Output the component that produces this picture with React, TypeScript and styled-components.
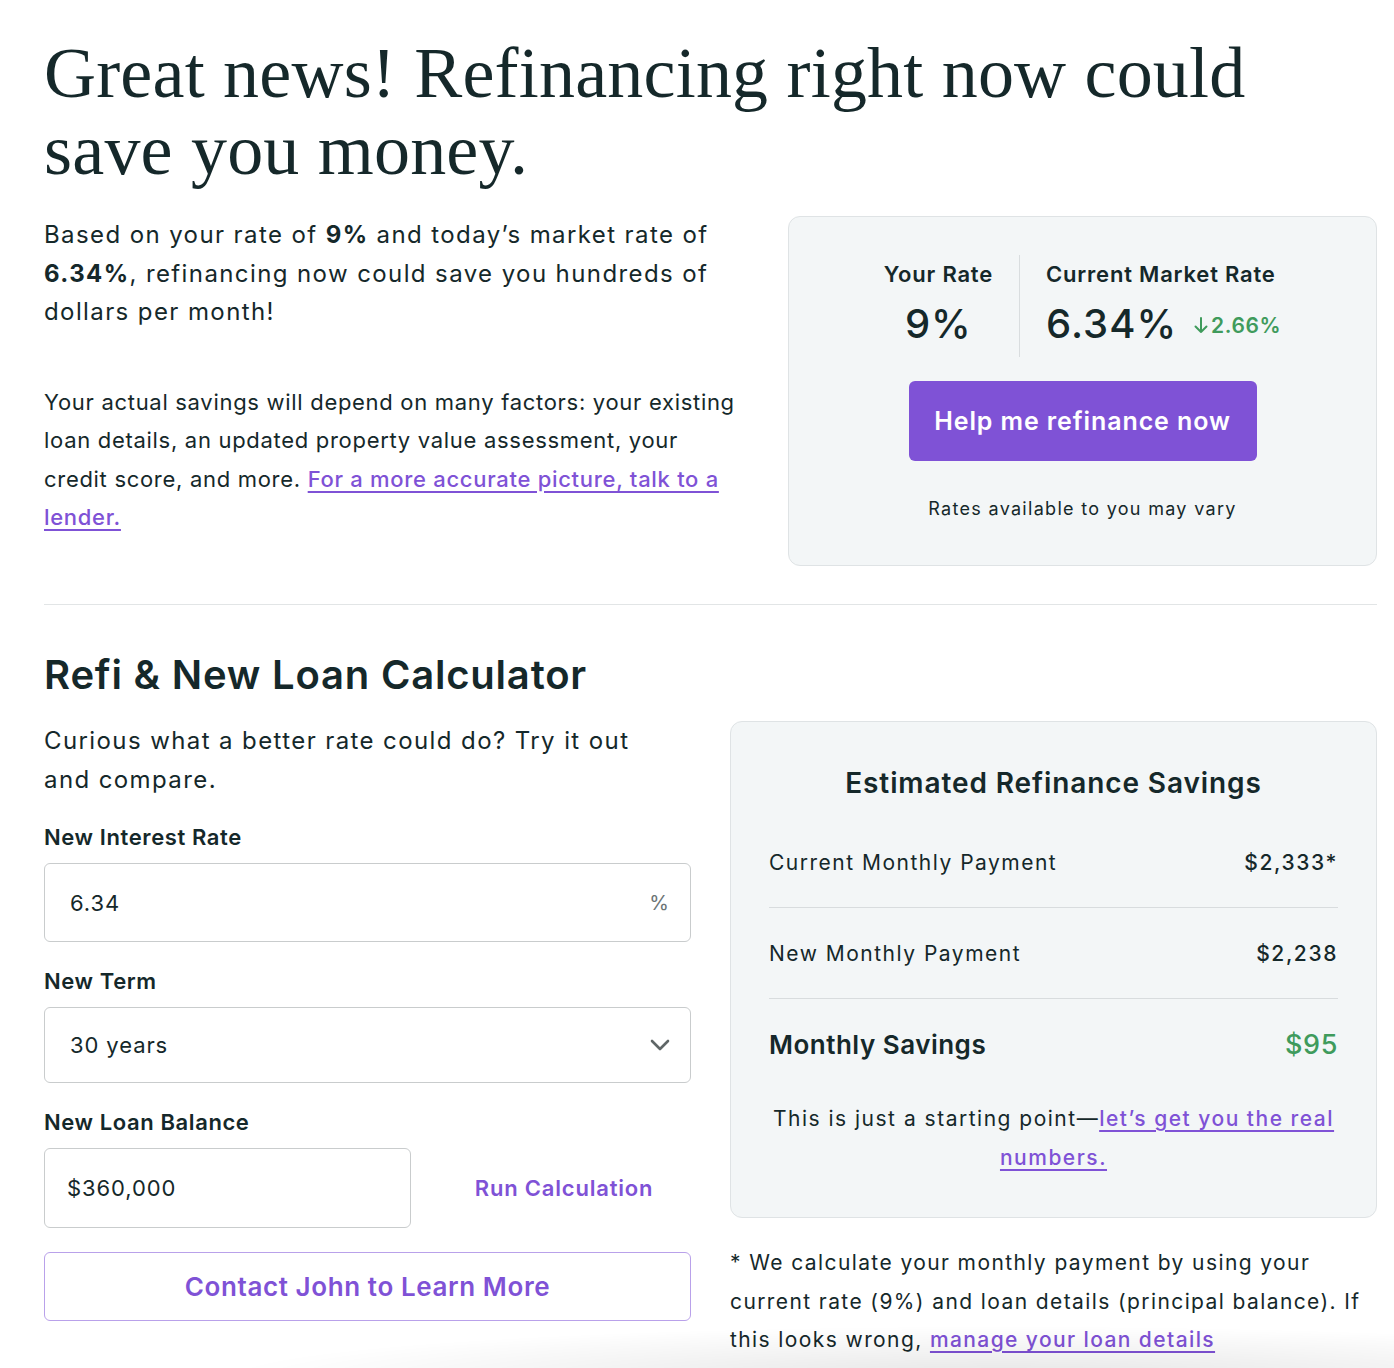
import React from "react";
import styled, { createGlobalStyle } from "styled-components";

const Global = createGlobalStyle`
  html, body { margin: 0; padding: 0; background: #ffffff; }
  body {
    font-family: Inter, "Noto Sans", sans-serif;
    color: #15282a;
    -webkit-font-smoothing: antialiased;
  }
  * { box-sizing: border-box; }
`;

const colors = {
  text: "#15282a",
  purple: "#7f52d6",
  purpleLight: "#b9a1ea",
  green: "#3f9b5c",
  cardBg: "#f3f6f7",
  cardBorder: "#dfe3e5",
  inputBorder: "#c9cccd",
  rule: "#e2e5e6",
};

const Page = styled.main`
  padding: 35px 17px 0 44px;
  width: 1394px;
`;

const Headline = styled.h1`
  font-family: "Liberation Serif", "Times New Roman", serif;
  font-weight: 400;
  font-size: 72px;
  line-height: 77px;
  letter-spacing: 0.2px;
  margin: 0 0 27px 0;
  color: ${colors.text};
  max-width: 1260px;
`;

const TopGrid = styled.section`
  display: grid;
  grid-template-columns: 1fr 589px;
  column-gap: 37px;
  align-items: start;
  padding-bottom: 38px;
  border-bottom: 1px solid ${colors.rule};
`;

const Lead = styled.p`
  font-size: 24px;
  line-height: 38.5px;
  letter-spacing: 1.4px;
  margin: 0 0 51px 0;
  max-width: 700px;
  strong { font-weight: 700; }
`;

const Body = styled.p`
  font-size: 22px;
  line-height: 38.5px;
  letter-spacing: 0.7px;
  max-width: 700px;
  margin: 0;
`;

const TextLink = styled.a`
  color: ${colors.purple};
  text-decoration: underline;
  text-underline-offset: 4px;
  text-decoration-thickness: 2px;
  font-weight: 500;
  cursor: pointer;
`;

const Card = styled.div`
  background: ${colors.cardBg};
  border: 1px solid ${colors.cardBorder};
  border-radius: 12px;
`;

const RateCard = styled(Card)`
  padding: 38px 24px 44px;
  display: flex;
  flex-direction: column;
  align-items: center;
`;

const RateRow = styled.div`
  display: flex;
  align-items: stretch;
  height: 102px;
`;

const RateCol = styled.div<{ $side: "left" | "right" }>`
  display: flex;
  flex-direction: column;
  align-items: ${(p) => (p.$side === "left" ? "center" : "flex-start")};
  padding: ${(p) => (p.$side === "left" ? "0 26px 0 0" : "0 0 0 26px")};
  ${(p) => p.$side === "left" && `border-right: 1px solid #d9dddf;`}
`;

const RateLabel = styled.div`
  font-size: 22px;
  line-height: 38px;
  font-weight: 600;
  letter-spacing: 0.8px;
`;

const RateValueRow = styled.div`
  display: flex;
  align-items: center;
  gap: 16px;
  margin-top: 6px;
`;

const RateValue = styled.div`
  font-size: 40px;
  line-height: 50px;
  font-weight: 500;
  letter-spacing: 1px;
`;

const Delta = styled.span`
  display: inline-flex;
  align-items: center;
  gap: 2px;
  color: ${colors.green};
  font-size: 21px;
  font-weight: 600;
  letter-spacing: 0.6px;
  margin-top: 2px;
`;

const PrimaryButton = styled.button`
  margin-top: 24px;
  width: 348px;
  height: 80px;
  border: none;
  border-radius: 6px;
  background: ${colors.purple};
  color: #ffffff;
  font-family: Inter, sans-serif;
  font-size: 25px;
  font-weight: 600;
  letter-spacing: 0.9px;
  cursor: pointer;
`;

const Caption = styled.div`
  margin-top: 36px;
  font-size: 18px;
  line-height: 24px;
  letter-spacing: 1.3px;
`;

const SectionTitle = styled.h2`
  font-size: 40px;
  line-height: 48px;
  font-weight: 600;
  letter-spacing: 0.8px;
  margin: 46px 0 22px;
`;

const CalcGrid = styled.section`
  display: grid;
  grid-template-columns: 647px 1fr;
  column-gap: 39px;
  align-items: start;
`;

const Intro = styled.p`
  font-size: 24px;
  line-height: 39px;
  letter-spacing: 1.4px;
  max-width: 620px;
  margin: 0 0 23px 0;
`;

const Field = styled.div`
  display: flex;
  flex-direction: column;
  margin-bottom: 24px;
`;

const FieldLabel = styled.label`
  font-size: 22px;
  line-height: 30px;
  font-weight: 600;
  letter-spacing: 0.6px;
  margin-bottom: 11px;
`;

const InputBox = styled.div<{ $h: number; $w?: number; $padL?: number; $padR?: number }>`
  height: ${(p) => p.$h}px;
  width: ${(p) => (p.$w ? `${p.$w}px` : "100%")};
  border: 1px solid ${colors.inputBorder};
  border-radius: 6px;
  background: #fff;
  display: flex;
  align-items: center;
  justify-content: space-between;
  padding: 0 ${(p) => p.$padR ?? 24}px 0 ${(p) => p.$padL ?? 25}px;
`;

const InputText = styled.span`
  font-size: 22px;
  letter-spacing: 0.9px;
`;

const Suffix = styled.span`
  font-size: 20px;
  color: #6b7475;
  margin-right: -3px;
`;

const BalanceRow = styled.div`
  display: flex;
  align-items: center;
`;

const LinkButton = styled.button`
  flex: 1;
  background: none;
  border: none;
  color: ${colors.purple};
  font-family: Inter, sans-serif;
  font-size: 22px;
  font-weight: 600;
  letter-spacing: 0.8px;
  text-align: center;
  cursor: pointer;
  padding: 0 0 0 26px;
`;

const OutlineButton = styled.button`
  width: 100%;
  height: 69px;
  margin-top: 0;
  border: 1.5px solid ${colors.purpleLight};
  border-radius: 6px;
  background: #fff;
  color: ${colors.purple};
  font-family: Inter, sans-serif;
  font-size: 26px;
  font-weight: 600;
  letter-spacing: 0.6px;
  cursor: pointer;
`;

const RightCol = styled.div`
  display: flex;
  flex-direction: column;
`;

const SavingsCard = styled(Card)`
  padding: 43px 38px 40px 38px;
`;

const SavingsTitle = styled.h3`
  margin: 0 0 16px;
  text-align: center;
  font-size: 28px;
  line-height: 36px;
  font-weight: 600;
  letter-spacing: 0.9px;
`;

const SavingsRow = styled.div<{ $last?: boolean }>`
  display: flex;
  justify-content: space-between;
  align-items: center;
  padding: 31.5px 0;
  border-bottom: ${(p) => (p.$last ? "none" : `1px solid #d8dcde`)};
`;

const RowLabel = styled.span<{ $strong?: boolean }>`
  font-size: ${(p) => (p.$strong ? "26px" : "21px")};
  line-height: 27px;
  font-weight: ${(p) => (p.$strong ? 600 : 400)};
  letter-spacing: ${(p) => (p.$strong ? "0.5px" : "1.5px")};
`;

const RowValue = styled.span<{ $green?: boolean; $strong?: boolean }>`
  font-size: ${(p) => (p.$strong ? "27px" : "21px")};
  line-height: 27px;
  font-weight: 500;
  letter-spacing: ${(p) => (p.$strong ? "0.6px" : "1.6px")};
  color: ${(p) => (p.$green ? colors.green : colors.text)};
`;

const Note = styled.p`
  margin: 10px 0 0;
  text-align: center;
  font-size: 21px;
  line-height: 39px;
  letter-spacing: 1.5px;
`;

const Footnote = styled.p`
  margin: 26px 0 0;
  font-size: 21px;
  line-height: 38.5px;
  letter-spacing: 1.4px;
`;

const BottomShade = styled.div`
  position: fixed;
  left: 0;
  right: 0;
  bottom: 0;
  height: 70px;
  pointer-events: none;
  background: radial-gradient(ellipse 75% 100% at 72% 115%, rgba(0, 0, 0, 0.1), rgba(0, 0, 0, 0) 75%);
`;

const ArrowDown = () => (
  <svg width="16" height="18" viewBox="0 0 16 18" fill="none" stroke={colors.green} strokeWidth="2" strokeLinecap="round" strokeLinejoin="round">
    <path d="M8 2v14M2.5 10.5L8 16l5.5-5.5" />
  </svg>
);

const Chevron = () => (
  <svg width="20" height="12" viewBox="0 0 20 12" fill="none" stroke="#5f6667" strokeWidth="2.6" strokeLinecap="round" strokeLinejoin="round">
    <path d="M2 2l8 8 8-8" />
  </svg>
);

export default function App() {
  return (
    <>
      <Global />
      <Page>
        <Headline>Great news! Refinancing right now could save you money.</Headline>
        <TopGrid>
          <div>
            <Lead>
              Based on your rate of <strong>9%</strong> and today’s market rate of <strong>6.34%</strong>, refinancing now could save you hundreds of dollars per month!
            </Lead>
            <Body>
              Your actual savings will depend on many factors: your existing loan details, an updated property value assessment, your credit score, and more.{" "}
              <TextLink>For a more accurate picture, talk to a lender.</TextLink>
            </Body>
          </div>
          <RateCard>
            <RateRow>
              <RateCol $side="left">
                <RateLabel>Your Rate</RateLabel>
                <RateValueRow>
                  <RateValue>9%</RateValue>
                </RateValueRow>
              </RateCol>
              <RateCol $side="right">
                <RateLabel>Current Market Rate</RateLabel>
                <RateValueRow>
                  <RateValue>6.34%</RateValue>
                  <Delta>
                    <ArrowDown />
                    2.66%
                  </Delta>
                </RateValueRow>
              </RateCol>
            </RateRow>
            <PrimaryButton>Help me refinance now</PrimaryButton>
            <Caption>Rates available to you may vary</Caption>
          </RateCard>
        </TopGrid>

        <SectionTitle>Refi &amp; New Loan Calculator</SectionTitle>
        <CalcGrid>
          <div>
            <Intro>Curious what a better rate could do? Try it out and compare.</Intro>
            <Field>
              <FieldLabel>New Interest Rate</FieldLabel>
              <InputBox $h={79}>
                <InputText>6.34</InputText>
                <Suffix>%</Suffix>
              </InputBox>
            </Field>
            <Field>
              <FieldLabel>New Term</FieldLabel>
              <InputBox $h={76} $padR={20}>
                <InputText>30 years</InputText>
                <Chevron />
              </InputBox>
            </Field>
            <Field>
              <FieldLabel>New Loan Balance</FieldLabel>
              <BalanceRow>
                <InputBox $h={80} $w={367} $padL={22}>
                  <InputText>$360,000</InputText>
                </InputBox>
                <LinkButton>Run Calculation</LinkButton>
              </BalanceRow>
            </Field>
            <OutlineButton>Contact John to Learn More</OutlineButton>
          </div>
          <RightCol>
            <SavingsCard>
              <SavingsTitle>Estimated Refinance Savings</SavingsTitle>
              <SavingsRow>
                <RowLabel>Current Monthly Payment</RowLabel>
                <RowValue>$2,333*</RowValue>
              </SavingsRow>
              <SavingsRow>
                <RowLabel>New Monthly Payment</RowLabel>
                <RowValue>$2,238</RowValue>
              </SavingsRow>
              <SavingsRow $last>
                <RowLabel $strong>Monthly Savings</RowLabel>
                <RowValue $strong $green>$95</RowValue>
              </SavingsRow>
              <Note>
                This is just a starting point—<TextLink>let’s get you the real numbers.</TextLink>
              </Note>
            </SavingsCard>
            <Footnote>
              * We calculate your monthly payment by using your current rate (9%) and loan details (principal balance). If this looks wrong, <TextLink>manage your loan details</TextLink>
            </Footnote>
          </RightCol>
        </CalcGrid>
      </Page>
      <BottomShade />
    </>
  );
}
